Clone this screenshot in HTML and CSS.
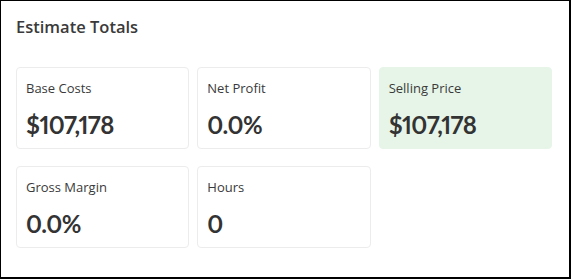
FILE: index.html
```html
<!DOCTYPE html>
<html lang="en">
<head>
    <meta charset="UTF-8">
    <meta name="viewport" content="width=device-width, initial-scale=1.0">
    <title>Estimate Totals</title>
    <link rel="stylesheet" href="styles.css">
</head>
<body>
    <div class="panel">
        <h2 class="panel-title">Estimate Totals</h2>
        <div class="totals">
            <div class="total-card">
                <div class="total-label">Base Costs</div>
                <div class="total-value">$107,178</div>
            </div>
            <div class="total-card">
                <div class="total-label">Net Profit</div>
                <div class="total-value">0.0%</div>
            </div>
            <div class="total-card highlight">
                <div class="total-label">Selling Price</div>
                <div class="total-value">$107,178</div>
            </div>
            <div class="total-card">
                <div class="total-label">Gross Margin</div>
                <div class="total-value">0.0%</div>
            </div>
            <div class="total-card">
                <div class="total-label">Hours</div>
                <div class="total-value">0</div>
            </div>
        </div>
    </div>
</body>
</html>
```

FILE: styles.css
```css
html, body {
    margin: 0;
    height: 100%;
}
body {
    font-family: "Open Sans", sans-serif;
    color: #333;
    background-color: white;
}
.panel {
    box-sizing: border-box;
    height: 279px;
    border-style: solid;
    border-color: #000;
    border-width: 1px 2px 2px 1px;
    padding: 16px 17px 0 15px;
}
.panel-title {
    margin: 0 0 30px 0;
    font-size: 16.5px;
    font-weight: 600;
    line-height: 20px;
    color: #3a3a3a;
}
.totals {
    display: grid;
    grid-template-columns: repeat(3, 1fr);
    column-gap: 8px;
    row-gap: 17px;
}
.total-card {
    height: 82px;
    box-sizing: border-box;
    border: 1px solid #ececec;
    border-radius: 4px;
    padding: 12px 10px 0 9px;
}
.highlight {
    background-color: #e6f5e8;
    border-color: #e6f5e8;
}
.total-label {
    font-size: 13px;
    line-height: 16px;
    font-weight: 500;
    color: #3a3a3a;
}
.total-value {
    margin-top: 15px;
    font-family: Lato, sans-serif;
    font-size: 24px;
    line-height: 28px;
    font-weight: 700;
    letter-spacing: -0.6px;
    font-variant-numeric: proportional-nums;
    color: #333;
}
```
